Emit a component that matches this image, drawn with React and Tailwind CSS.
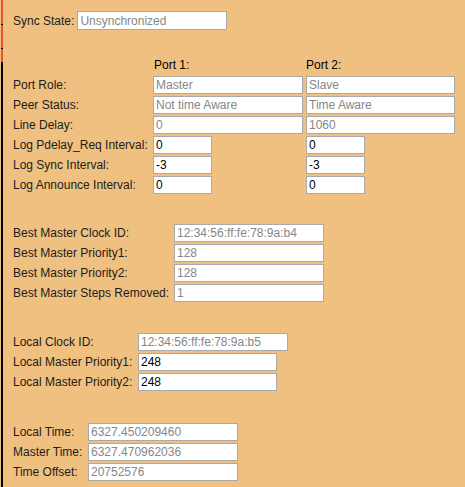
const labelCls = 'text-[#1c1c1c]';

function Field({ value, width = 'w-[150px]', editable = false }) {
  return (
    <input
      readOnly
      value={value}
      className={`h-[18px] ${width} border border-[#aaaaaa] bg-white pl-[2px] text-[12px] leading-none outline-none ${
        editable ? 'text-black' : 'text-[#868686]'
      }`}
    />
  );
}

function Row({ label, children, cols }) {
  return (
    <div className={`grid h-5 items-center ${cols}`}>
      <span className={labelCls}>{label}</span>
      {children}
    </div>
  );
}

const portRows = [
  { label: 'Port Role:', p1: 'Master', p2: 'Slave' },
  { label: 'Peer Status:', p1: 'Not time Aware', p2: 'Time Aware' },
  { label: 'Line Delay:', p1: '0', p2: '1060' },
  { label: 'Log Pdelay_Req Interval:', p1: '0', p2: '0', edit: true },
  { label: 'Log Sync Interval:', p1: '-3', p2: '-3', edit: true },
  { label: 'Log Announce Interval:', p1: '0', p2: '0', edit: true },
];

const bestMaster = [
  ['Best Master Clock ID:', '12:34:56:ff:fe:78:9a:b4'],
  ['Best Master Priority1:', '128'],
  ['Best Master Priority2:', '128'],
  ['Best Master Steps Removed:', '1'],
];

const times = [
  ['Local Time:', '6327.450209460'],
  ['Master Time:', '6327.470962036'],
  ['Time Offset:', '20752576'],
];

export default function App() {
  return (
    <div className="flex min-h-[487px] w-[465px] bg-[#f0c080] font-['Liberation_Sans',Arial,sans-serif] text-[12px]">
      {/* frame edge */}
      <div className="ml-[1px] flex w-[2px] flex-col">
        <div className="flex h-[62px] flex-col bg-[#e8532b]">
          <div className="mt-[24px] h-[1px] bg-black" />
          <div className="mt-[23px] h-[1px] bg-black" />
        </div>
        <div className="flex-1 bg-black" />
      </div>

      <div className="pl-[10px] pt-[11px]">
        <div className="flex h-[19px] items-center gap-[3px]">
          <span className={labelCls}>Sync State:</span>
          <Field value="Unsynchronized" width="w-[150px] h-[19px]" />
        </div>

        <div className="mt-[25px]">
          <div className="grid h-5 grid-cols-[140px_153px_auto] items-center text-black">
            <span />
            <span className="pl-[1px]">Port 1:</span>
            <span>Port 2:</span>
          </div>
          {portRows.map((r) => (
            <Row key={r.label} label={r.label} cols="grid-cols-[140px_153px_auto]">
              <Field value={r.p1} width={r.edit ? 'w-[59px]' : 'w-[150px]'} editable={r.edit} />
              <Field value={r.p2} width={r.edit ? 'w-[59px]' : 'w-[149px]'} editable={r.edit} />
            </Row>
          ))}
        </div>

        <div className="mt-[28px]">
          {bestMaster.map(([label, value]) => (
            <Row key={label} label={label} cols="grid-cols-[161px_auto]">
              <Field value={value} />
            </Row>
          ))}
        </div>

        <div className="mt-[29px]">
          <Row label="Local Clock ID:" cols="grid-cols-[125px_auto]">
            <Field value="12:34:56:ff:fe:78:9a:b5" />
          </Row>
          <Row label="Local Master Priority1:" cols="grid-cols-[125px_auto]">
            <Field value="248" width="w-[139px]" editable />
          </Row>
          <Row label="Local Master Priority2:" cols="grid-cols-[125px_auto]">
            <Field value="248" width="w-[139px]" editable />
          </Row>
        </div>

        <div className="mt-[30px]">
          {times.map(([label, value]) => (
            <Row key={label} label={label} cols="grid-cols-[75px_auto]">
              <Field value={value} />
            </Row>
          ))}
        </div>
      </div>
    </div>
  );
}
